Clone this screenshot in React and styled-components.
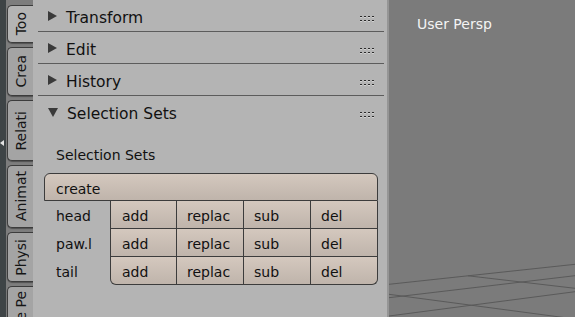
import styled, { createGlobalStyle } from 'styled-components';

const GlobalStyle = createGlobalStyle`
  html, body {
    margin: 0;
    padding: 0;
    background: #7b7b7b;
  }
  body {
    font-family: "DejaVu Sans", "Liberation Sans", sans-serif;
  }
`;

const tabs = [
  { label: 'Too', h: 38, active: true },
  { label: 'Crea', h: 49 },
  { label: 'Relati', h: 61 },
  { label: 'Animat', h: 63 },
  { label: 'Physi', h: 50 },
  { label: 'Grease Pe', h: 80 },
];

const panels = ['Transform', 'Edit', 'History'];

const sets = ['head', 'paw.l', 'tail'];
const actions = ['add', 'replac', 'sub', 'del'];

function DragHandle() {
  return (
    <Handle width="15" height="6" viewBox="0 0 15 6">
      {[0, 1, 2, 3].map(i => (
        <g key={i}>
          <rect x={i * 4} y="0" width="2" height="1" fill="#2b2b2b" />
          <rect x={i * 4} y="1" width="2" height="1" fill="#d2d2d2" />
          <rect x={i * 4} y="4" width="2" height="1" fill="#2b2b2b" />
          <rect x={i * 4} y="5" width="2" height="1" fill="#d2d2d2" />
        </g>
      ))}
    </Handle>
  );
}

function PanelHeader({ title, open }) {
  return (
    <Header $open={open}>
      <Arrow $open={open} />
      <Title>{title}</Title>
      <DragHandle />
    </Header>
  );
}

export default function App() {
  return (
    <Root>
      <GlobalStyle />
      <Edge>
        <EdgeArrow />
      </Edge>
      <TabStrip>
        {tabs.map(t => (
          <Tab key={t.label} $h={t.h} $active={t.active}>
            <TabLabel>{t.label}</TabLabel>
          </Tab>
        ))}
      </TabStrip>
      <Panel>
        {panels.map(p => <PanelHeader key={p} title={p} />)}
        <PanelHeader title="Selection Sets" open />
        <Body>
          <Label>Selection Sets</Label>
          <SetGrid>
            <CreateButton>create</CreateButton>
            {sets.map((name, r) => (
              <Row key={name}>
                <RowLabel>{name}</RowLabel>
                {actions.map((a, c) => (
                  <SetButton
                    key={a}
                    $first={c === 0}
                    $bl={r === sets.length - 1 && c === 0}
                    $br={r === sets.length - 1 && c === actions.length - 1}
                  >
                    {a}
                  </SetButton>
                ))}
              </Row>
            ))}
          </SetGrid>
        </Body>
      </Panel>
      <Viewport>
        <ViewLabel>User Persp</ViewLabel>
        <Floor width="186" height="55" viewBox="0 0 186 55">
          <line x1="0" y1="22.3" x2="186" y2="2.3" />
          <line x1="0" y1="35.7" x2="186" y2="13.7" />
          <line x1="0" y1="32.3" x2="186" y2="57" />
          <line x1="0" y1="54" x2="186" y2="29.7" />
          <line x1="79" y1="13.8" x2="186" y2="26.3" />
        </Floor>
      </Viewport>
    </Root>
  );
}

const Root = styled.div`
  display: flex;
  width: 575px;
  height: 317px;
  overflow: hidden;
`;

const Edge = styled.div`
  width: 6px;
  flex: none;
  box-sizing: border-box;
  padding-top: 140px;
  background: #3e4446;
  display: flex;
  flex-direction: column;
`;

const EdgeArrow = styled.div`
  width: 0;
  height: 0;
  border-right: 4px solid #e4e4e4;
  border-top: 3px solid transparent;
  border-bottom: 3px solid transparent;
`;

const TabStrip = styled.div`
  width: 27px;
  flex: none;
  box-sizing: border-box;
  padding: 5px 0 0 1px;
  background: #7d7d7d;
  display: flex;
  flex-direction: column;
  gap: 4px;
`;

const Tab = styled.div`
  flex: none;
  height: ${props => props.$h}px;
  box-sizing: border-box;
  background: ${props => props.$active ? '#b4b4b4' : '#a4a4a4'};
  border: 1px solid #3c3c3c;
  border-right: none;
  border-radius: 5px 0 0 5px;
  box-shadow: 0 1px 1px rgba(0, 0, 0, 0.35);
  display: flex;
  align-items: center;
  justify-content: center;
  overflow: hidden;
  color: #151515;
  font-size: 14px;
`;

const TabLabel = styled.span`
  writing-mode: vertical-rl;
  transform: rotate(180deg);
  white-space: nowrap;
  line-height: 14px;
`;

const Panel = styled.div`
  width: 354px;
  flex: none;
  background: #b4b4b4;
  border-right: 2px solid #959595;
  display: flex;
  flex-direction: column;
`;

const Header = styled.div`
  height: 32px;
  box-sizing: border-box;
  margin: 0 3px 0 5px;
  padding: 4px 9px 0 10px;
  border-bottom: 1px solid ${props => props.$open ? 'transparent' : '#5c5c5c'};
  display: flex;
  align-items: center;
  gap: 9px;
`;

const Arrow = styled.span`
  flex: none;
  width: 0;
  height: 0;
  margin-bottom: 3px;
  ${props => props.$open ? `
    border-top: 9px solid #3a3a3a;
    border-left: 5px solid transparent;
    border-right: 5px solid transparent;
  ` : `
    border-left: 9px solid #3a3a3a;
    border-top: 5px solid transparent;
    border-bottom: 5px solid transparent;
  `}
`;

const Title = styled.span`
  flex: 1;
  font-size: 15.5px;
  color: #111;
`;

const Handle = styled.svg`
  flex: none;
  display: block;
  margin-top: 3px;
`;

const Body = styled.div`
  padding: 19px 9px 0 11px;
  display: flex;
  flex-direction: column;
`;

const Label = styled.div`
  margin-left: 12px;
  font-size: 14px;
  line-height: 16px;
  color: #111;
`;

const SetGrid = styled.div`
  margin-top: 10px;
  display: grid;
  grid-template-columns: 66px repeat(4, 1fr);
`;

const Row = styled.div`
  display: contents;
`;

const CreateButton = styled.div`
  grid-column: 1 / -1;
  height: 28px;
  box-sizing: border-box;
  padding: 7px 11px 0;
  border: 1px solid #3c3c3c;
  border-radius: 6px 6px 0 0;
  background: linear-gradient(#d4c8be, #bfb4ab);
  font-size: 14px;
  line-height: 16px;
  color: #111;
`;

const RowLabel = styled.div`
  height: 28px;
  box-sizing: border-box;
  padding: 7px 0 0 12px;
  font-size: 14px;
  line-height: 16px;
  color: #111;
`;

const SetButton = styled.div`
  height: 28px;
  box-sizing: border-box;
  padding: 7px 0 0 ${props => props.$first ? 11 : 10}px;
  border-right: 1px solid #3c3c3c;
  border-bottom: 1px solid #3c3c3c;
  ${props => props.$first && 'border-left: 1px solid #3c3c3c;'}
  border-bottom-left-radius: ${props => props.$bl ? '6px' : '0'};
  border-bottom-right-radius: ${props => props.$br ? '6px' : '0'};
  background: linear-gradient(#d4c8be, #bfb4ab);
  font-size: 14px;
  line-height: 16px;
  color: #111;
  white-space: nowrap;
  overflow: hidden;
`;

const Viewport = styled.div`
  flex: 1;
  background: #7b7b7b;
  display: flex;
  flex-direction: column;
  justify-content: space-between;
`;

const ViewLabel = styled.div`
  padding: 16px 0 0 28px;
  font-size: 14px;
  line-height: 16px;
  color: #f4f4f4;
`;

const Floor = styled.svg`
  display: block;
  stroke: #5a5a5a;
  stroke-width: 1;
`;
